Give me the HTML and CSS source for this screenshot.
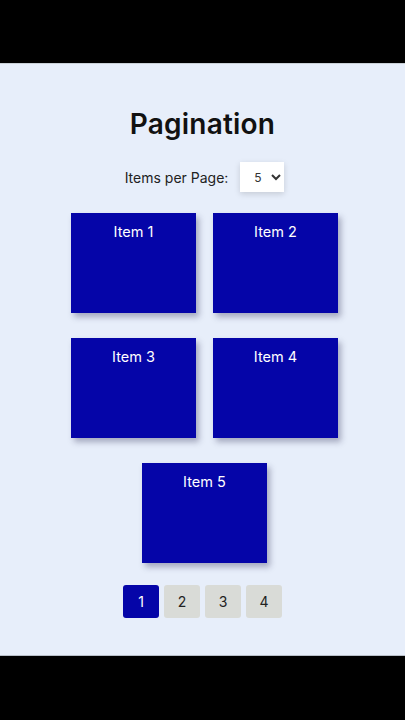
FILE: index.html
```html
<!DOCTYPE html>
<html lang="en">
<head>
    <meta charset="UTF-8">
    <meta name="viewport" content="width=device-width, initial-scale=1.0">
    <title>Pagination</title>
    <link rel="stylesheet" href="styles.css">
</head>
<body>
    <div class="top-band"></div>
    <main class="page">
        <h1>Pagination</h1>
        <div class="per-page">
            <label for="perPage">Items per Page:</label>
            <select id="perPage">
                <option value="5" selected>5</option>
                <option value="10">10</option>
            </select>
        </div>
        <div class="items">
            <div class="item">Item 1</div>
            <div class="item">Item 2</div>
            <div class="item">Item 3</div>
            <div class="item">Item 4</div>
            <div class="item">Item 5</div>
        </div>
        <div class="pager">
            <button class="page-btn active">1</button>
            <button class="page-btn">2</button>
            <button class="page-btn">3</button>
            <button class="page-btn">4</button>
        </div>
    </main>
    <div class="bottom-band"></div>
</body>
</html>
```

FILE: styles.css
```css
body {
    margin: 0;
    background: #000;
    font-family: Inter, "Open Sans", sans-serif;
    height: 720px;
    display: flex;
    flex-direction: column;
}
.top-band { height: 63px; }
.bottom-band { flex: 1; }
.page {
    height: 593px;
    background: #e7eefa;
    display: flex;
    flex-direction: column;
    align-items: center;
    border-top: 1px solid #c9d0d6;
    border-bottom: 1px solid #b8bfc8;
    box-sizing: border-box;
}
h1 {
    margin: 42px 0 0;
    font-size: 28px;
    font-weight: 600;
    color: #111;
    line-height: 36px;
    letter-spacing: 0.2px;
}
.per-page {
    margin: 20px 0 0 4px;
    display: flex;
    align-items: center;
    gap: 12px;
    font-size: 14px;
    color: #222;
}
.per-page select {
    width: 44px;
    height: 30px;
    border: none;
    background: #fff;
    color: #333;
    font-family: inherit;
    font-size: 12px;
    padding-left: 10px;
    box-shadow: 0 2px 6px rgba(0, 0, 0, 0.15);
}
.items {
    margin: 21px 0 0 4px;
    width: 267px;
    display: flex;
    flex-wrap: wrap;
    justify-content: center;
    gap: 25px 17px;
}
.item {
    width: 125px;
    height: 100px;
    background: #0505a8;
    color: #fff;
    font-size: 14.5px;
    text-align: center;
    padding-top: 10px;
    box-sizing: border-box;
    box-shadow: 3px 4px 6px rgba(40, 40, 80, 0.35);
}
.pager {
    margin-top: 22px;
    display: flex;
    gap: 5px;
}
.page-btn {
    width: 36px;
    height: 33px;
    border: none;
    border-radius: 3px;
    background: #d9dbd7;
    color: #222;
    font-family: inherit;
    font-size: 14px;
}
.page-btn.active {
    background: #0505a8;
    color: #fff;
}
```
